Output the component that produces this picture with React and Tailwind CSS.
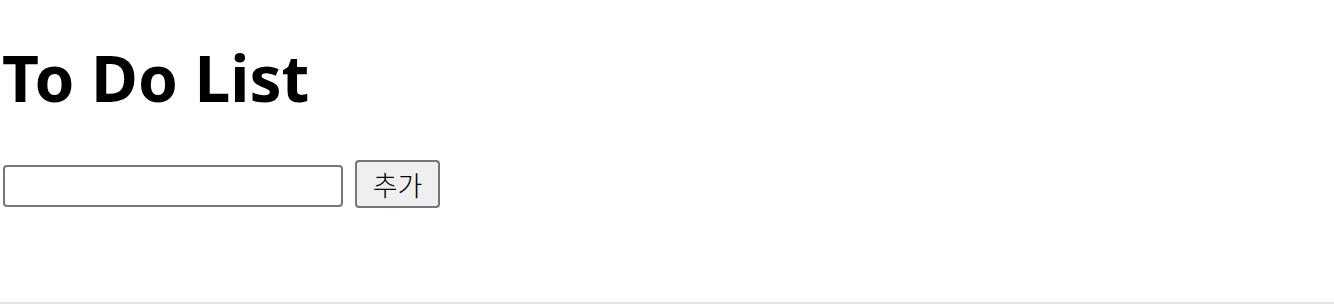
export default function App() {
  return (
    <div
      className="h-[304px] border-b-2 border-[#e3e3e3] bg-white text-black"
      style={{ fontFamily: '"Noto Sans", "Noto Sans CJK KR", sans-serif' }}
    >
      <div className="pt-[40px] pl-[2px]">
        <h1 className="text-[64px] font-bold leading-[76px]">To Do List</h1>
        <div className="mt-[44px] flex items-start gap-[12px] pl-[1px]">
          <input
            type="text"
            className="mt-[5px] h-[42px] w-[340px] rounded-[4px] border-2 border-[#767676] bg-white px-2 outline-none"
          />
          <button
            type="button"
            className="h-[48px] w-[85px] rounded-[4px] border-2 border-[#767676] bg-[#efefef] text-[27px] font-light leading-none"
            style={{ fontFamily: '"Noto Sans CJK KR", sans-serif' }}
          >
            추가
          </button>
        </div>
      </div>
    </div>
  );
}
